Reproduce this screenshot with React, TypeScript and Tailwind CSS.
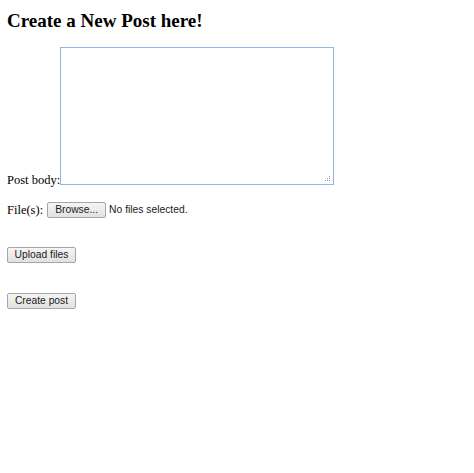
import * as React from "react";

function GrayButton({ label, width }: { label: string; width: string }) {
  return (
    <button
      type="button"
      className={`${width} h-[16px] flex items-center justify-center rounded-[2px] border border-[#a6a6a6] bg-gradient-to-b from-[#f5f5f5] to-[#e1e1e1] font-['Liberation_Sans',Arial,sans-serif] text-[10.3px] leading-none text-[#1a1a1a]`}
    >
      {label}
    </button>
  );
}

export default function App() {
  return (
    <div className="min-h-screen bg-white px-[7px] font-['Liberation_Serif','Times_New_Roman',serif] text-[12.5px] text-black">
      <h1 className="pt-[10px] text-[19px] font-bold leading-[22px]">Create a New Post here!</h1>

      <div className="mt-[15px] flex items-end">
        <span className="leading-[10px]">Post body:</span>
        <div className="relative">
          <textarea className="block h-[138px] w-[274px] resize-none border border-[#93b4e6] bg-white outline-none" />
          {/* resize grip */}
          <svg
            className="pointer-events-none absolute bottom-[3px] right-[3px]"
            width="6"
            height="6"
            viewBox="0 0 6 6"
            aria-hidden="true"
          >
            <g fill="#9a9a9a">
              <rect x="4" y="0" width="1" height="1" />
              <rect x="2" y="2" width="1" height="1" />
              <rect x="4" y="2" width="1" height="1" />
              <rect x="0" y="4" width="1" height="1" />
              <rect x="2" y="4" width="1" height="1" />
              <rect x="4" y="4" width="1" height="1" />
            </g>
          </svg>
        </div>
      </div>

      <div className="mt-[17px] flex h-[16px] items-center">
        <span className="mr-[4px] leading-[16px]">File(s):</span>
        <GrayButton label="Browse..." width="w-[59px]" />
        <span className="ml-[3px] font-['Liberation_Sans',Arial,sans-serif] text-[10.3px] text-[#1a1a1a]">
          No files selected.
        </span>
      </div>

      <div className="mt-[29px] flex">
        <GrayButton label="Upload files" width="w-[69px]" />
      </div>

      <div className="mt-[30px] flex">
        <GrayButton label="Create post" width="w-[69px]" />
      </div>
    </div>
  );
}
